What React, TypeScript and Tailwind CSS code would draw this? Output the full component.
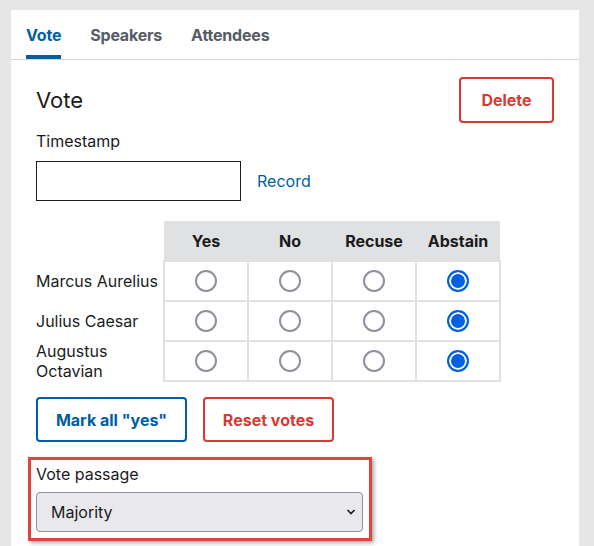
import React from "react";

const names = ["Marcus Aurelius", "Julius Caesar", "Augustus Octavian"];
const cols = ["Yes", "No", "Recuse", "Abstain"];

function Radio({ checked }: { checked: boolean }) {
  return checked ? (
    <span className="inline-block w-[22px] h-[22px] rounded-full border-2 border-[#0060df] bg-[#0060df] shadow-[inset_0_0_0_2px_white]" />
  ) : (
    <span className="inline-block w-[22px] h-[22px] rounded-full border-2 border-[#8f8f9d] bg-white" />
  );
}

export default function App() {
  return (
    <div
      className="min-h-[546px] bg-[#e6e6e6] pt-[10px] pl-[11px] text-[#1b1b1b]"
      style={{ fontFamily: "Inter, 'Liberation Sans', sans-serif" }}
    >
      <div className="w-[568px] h-[536px] bg-white">
        <div className="flex gap-[29px] px-[15px] h-[50px] border-b border-[#d6d7d9]">
          <div className="relative flex items-center text-[16px] font-bold text-[#005ea2] tracking-[-0.2px]">
            Vote
            <span className="absolute left-0 right-0 bottom-0 h-[4px] bg-[#005ea2]" />
          </div>
          <div className="flex items-center text-[16px] font-bold text-[#565c65] tracking-[-0.2px]">Speakers</div>
          <div className="flex items-center text-[16px] font-bold text-[#565c65] tracking-[-0.2px]">Attendees</div>
        </div>

        <div className="pl-[25px] pr-[25px]">
          <div className="flex items-center justify-between mt-[17px] h-[46px]">
            <h2 className="text-[22px] font-normal">Vote</h2>
            <button className="w-[95px] h-[46px] border-2 border-[#d83933] rounded-[4px] text-[#d83933] font-bold text-[16px]">
              Delete
            </button>
          </div>

          <div className="mt-[6px] text-[16px] leading-[24px]">Timestamp</div>
          <div className="flex items-center mt-[8px]">
            <input className="w-[205px] h-[40px] border border-[#1b1b1b] outline-none" />
            <span className="ml-[16px] text-[#005ea2] text-[16px]">Record</span>
          </div>

          <table className="mt-[20px] border-collapse text-[16px]">
            <thead>
              <tr className="h-[40px]">
                <th className="w-[128px] p-0"></th>
                {cols.map((c) => (
                  <th key={c} className="w-[84px] bg-[#dfe1e2] font-bold p-0 text-center">
                    {c}
                  </th>
                ))}
              </tr>
            </thead>
            <tbody>
              {names.map((n) => (
                <tr key={n} className="h-[40px]">
                  <td className="p-0 pr-[4px] leading-[20px]">{n}</td>
                  {cols.map((c) => (
                    <td key={c} className="border-2 border-[#dfe1e2] p-0 text-center align-middle">
                      <div className="flex items-center justify-center h-[36px]">
                        <Radio checked={c === "Abstain"} />
                      </div>
                    </td>
                  ))}
                </tr>
              ))}
            </tbody>
          </table>

          <div className="flex gap-[16px] mt-[15px]">
            <button className="w-[151px] h-[45px] border-2 border-[#005ea2] rounded-[4px] text-[#005ea2] font-bold text-[16px]">
              Mark all "yes"
            </button>
            <button className="w-[131px] h-[45px] border-2 border-[#d83933] rounded-[4px] text-[#d83933] font-bold text-[16px]">
              Reset votes
            </button>
          </div>

          <div className="-ml-[8px] mt-[15px] w-[344px] border-[3px] border-[#e0453d] pl-[5px] pr-[6px] pb-[6px] pt-[2px] shadow-[2px_2px_4px_rgba(0,0,0,0.35)]">
            <div className="text-[16px] leading-[24px]">Vote passage</div>
            <div className="relative mt-[6px]">
              <select className="appearance-none w-full h-[40px] bg-[#e9e9ed] border border-[#8f8f9d] rounded-[4px] pl-[14px] text-[16px] text-[#1b1b1b] outline-none">
                <option>Majority</option>
              </select>
              <svg
                className="absolute right-[7px] top-[16px] pointer-events-none"
                width="10"
                height="8"
                viewBox="0 0 10 8"
              >
                <path d="M1.5 2 L5 5.5 L8.5 2" fill="none" stroke="#1b1b1b" strokeWidth="1.6" />
              </svg>
            </div>
          </div>
        </div>
      </div>
    </div>
  );
}
